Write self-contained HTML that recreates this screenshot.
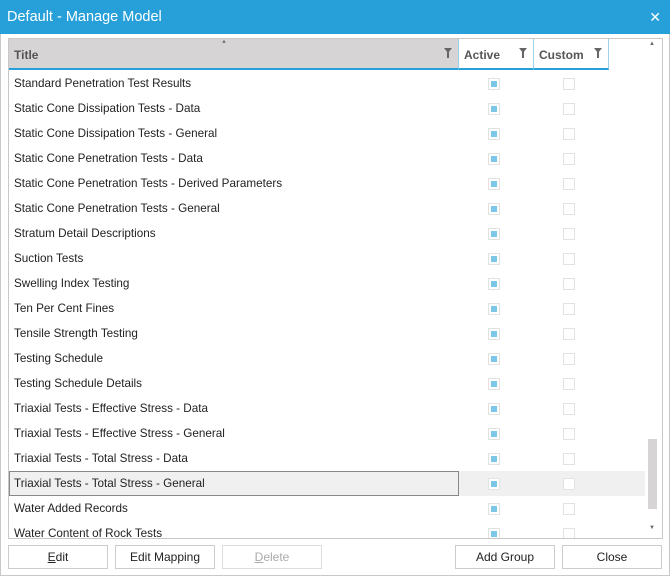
<!DOCTYPE html>
<html><head><style>
*{box-sizing:border-box;margin:0;padding:0}
body{width:670px;height:576px;background:#fff;font-family:"Liberation Sans",sans-serif;font-size:12px;color:#222;position:relative;overflow:hidden}
.frame{position:absolute;left:0;top:0;width:670px;height:576px;border:1px solid #c8c8c8}
.tb{position:absolute;left:0;top:0;width:670px;height:34px;background:#27a0da;color:#fff;font-size:14.5px;line-height:34px;padding-left:7px}
.tb .x{position:absolute;right:9px;top:0;font-size:14px}
.grid{position:absolute;left:8px;top:38px;width:655px;height:501px;border:1px solid #c8c8c8;overflow:hidden}
.hd{position:absolute;top:0;height:31px;border-bottom:2px solid #27a0da;font-weight:bold;color:#555;font-size:12px;line-height:33px;padding-left:5px}
.f{position:absolute;right:6px;top:9px;width:0;height:0;border-left:4px solid transparent;border-right:4px solid transparent;border-top:5px solid #666}
.f:after{content:"";position:absolute;left:-1px;top:-1px;width:2px;height:6px;background:#666}
.row{position:absolute;left:0;width:636px;height:25px;line-height:25px;padding-left:5px;font-size:11.7px}
.cb{position:absolute;top:7px;width:12px;height:12px;border:1px solid #e2e2e2;background:#fff}
.cb.a:after{content:"";position:absolute;left:2px;top:2px;width:6px;height:6px;background:#7cc6ea}
.btn{position:absolute;top:545px;height:24px;border:1px solid #ccc;background:#fff;text-align:center;line-height:22px;font-size:12px;color:#222}
</style></head><body>
<div class="frame"></div>
<div class="tb">Default - Manage Model<span class="x">✕</span></div>
<div class="grid">
<div class="hd" style="left:0;width:449px;background:#d6d4d4">Title<span style="position:absolute;left:212px;top:-13px;font-size:6px;color:#777">▲</span><span class="f"></span></div>
<div class="hd" style="left:449px;width:76px;border-left:1px solid #9cd0ec;border-right:1px solid #9cd0ec">Active<span class="f"></span></div>
<div class="hd" style="left:525px;width:75px;border-right:1px solid #9cd0ec">Custom<span class="f"></span></div>
<div style="position:absolute;left:640px;top:2px;font-size:6px;color:#666">▲</div>
<div style="position:absolute;left:639px;top:400px;width:9px;height:70px;background:#d6d4d4"></div>
<div style="position:absolute;left:640px;top:486px;font-size:6px;color:#666">▼</div>
<div id="rows"></div>
</div>
<div class="btn" style="left:8px;width:100px"><u>E</u>dit</div>
<div class="btn" style="left:115px;width:100px">Edit Mapping</div>
<div class="btn" style="left:222px;width:100px;color:#aaa;border-color:#ddd"><u>D</u>elete</div>
<div class="btn" style="left:455px;width:100px">Add Group</div>
<div class="btn" style="left:562px;width:100px">Close</div>
<script>
var t=["Standard Penetration Test Results","Static Cone Dissipation Tests - Data","Static Cone Dissipation Tests - General","Static Cone Penetration Tests - Data","Static Cone Penetration Tests - Derived Parameters","Static Cone Penetration Tests - General","Stratum Detail Descriptions","Suction Tests","Swelling Index Testing","Ten Per Cent Fines","Tensile Strength Testing","Testing Schedule","Testing Schedule Details","Triaxial Tests - Effective Stress - Data","Triaxial Tests - Effective Stress - General","Triaxial Tests - Total Stress - Data","Triaxial Tests - Total Stress - General","Water Added Records","Water Content of Rock Tests"];
var h="";t.forEach(function(s,i){var top=32+25*i;var sel=i==16;
h+='<div class="row" style="top:'+top+'px;'+(sel?'background:#f0f0f0':'')+'">'+(sel?'<div style="position:absolute;left:0;top:0;width:450px;height:25px;border:1px solid #888"></div>':'')+'<span style="position:relative">'+s+'</span><div class="cb a" style="left:479px"></div><div class="cb" style="left:554px"></div></div>';});
document.getElementById("rows").innerHTML=h;
</script>
</body></html>
